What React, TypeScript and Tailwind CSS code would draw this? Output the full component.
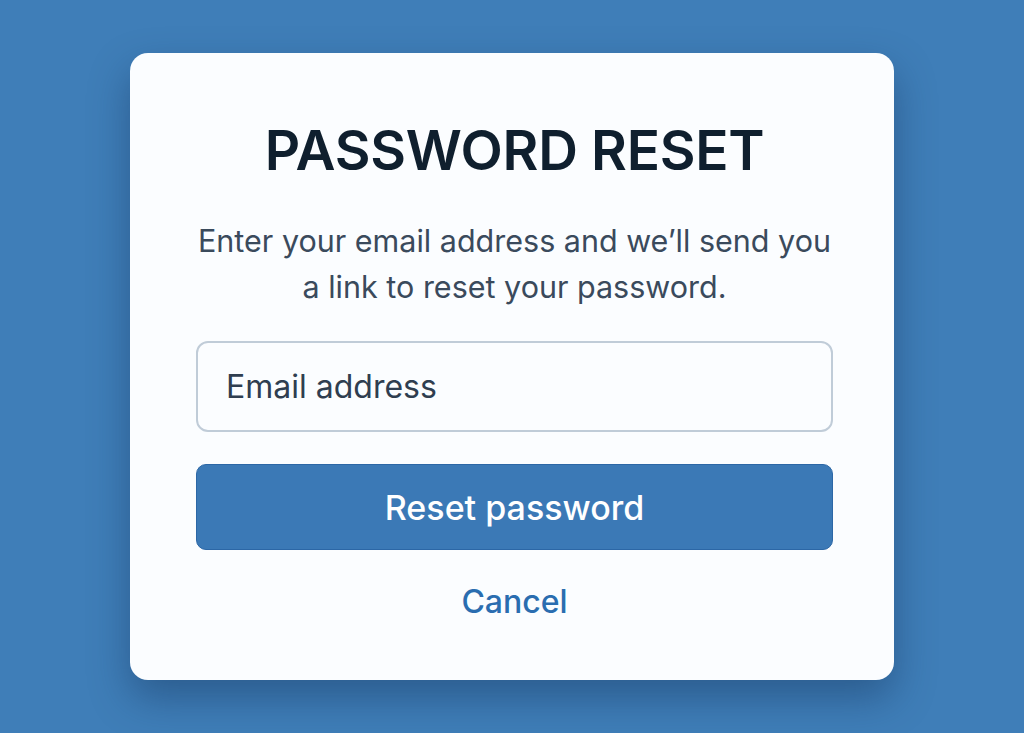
export default function App() {
  return (
    <div className="min-h-screen w-full bg-[#3f7eb8] flex items-center justify-center font-['Inter',sans-serif]">
      <div className="w-[764px] h-[627px] bg-[#fbfdff] rounded-[18px] shadow-[0_18px_40px_rgba(20,50,90,0.45)] flex flex-col items-center pl-[66px] pr-[61px] pt-[70px]">
        <h1 className="text-[55px] leading-none font-semibold text-[#0f1f2e] tracking-[-0.3px]">
          PASSWORD RESET
        </h1>
        <p className="mt-[40px] text-center text-[30.5px] leading-[46px] text-[#3a4a5c]">
          Enter your email address and we’ll send you
          <br />
          a link to reset your password.
        </p>
        <input
          type="email"
          placeholder="Email address"
          className="mt-[31px] w-full h-[91px] rounded-[12px] border-2 border-[#c0ccd8] bg-[#fbfdff] px-[28px] text-[32px] text-[#2f3e50] placeholder:text-[#2f3e50] outline-none"
        />
        <button className="mt-[32px] w-full h-[86px] rounded-[10px] bg-[#3b79b6] border border-[#2c67a6] text-white text-[34px] font-medium">
          Reset password
        </button>
        <button className="mt-[28px] text-[32px] font-medium text-[#2a6db0]">
          Cancel
        </button>
      </div>
    </div>
  );
}
